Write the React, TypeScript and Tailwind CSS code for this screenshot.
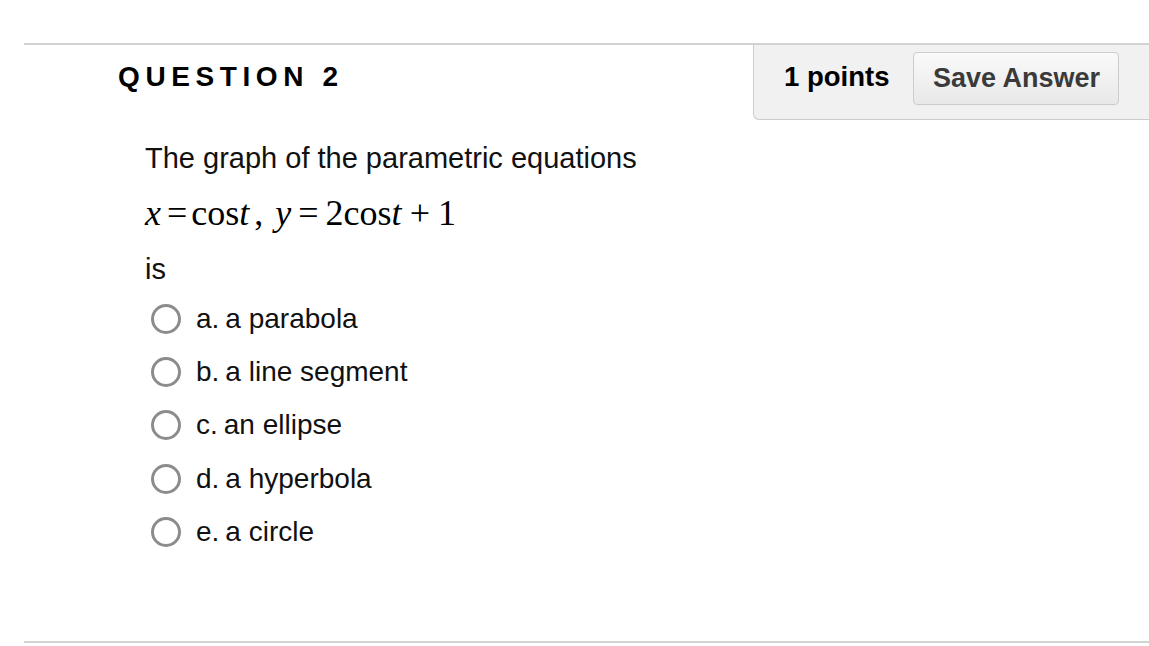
const options = [
  { key: 'a.', label: 'a parabola' },
  { key: 'b.', label: 'a line segment' },
  { key: 'c.', label: 'an ellipse' },
  { key: 'd.', label: 'a hyperbola' },
  { key: 'e.', label: 'a circle' },
]

function Radio() {
  return (
    <span className="w-[30px] h-[30px] rounded-full border-[3px] border-[#8c8c8c] bg-white shrink-0" />
  )
}

export default function App() {
  return (
    <div className="w-[1149px] h-[646px] overflow-hidden bg-white pt-[43px] pl-6 font-['Liberation_Sans',Arial,sans-serif] text-[#111]">
      <div className="border-t-2 border-[#d2d2d2] h-[598px] flex flex-col">
        <div className="flex justify-between">
          <h2 className="pl-[94px] pt-[16px] text-[28px] leading-[31px] font-bold tracking-[5.6px] text-black">
            QUESTION 2
          </h2>
          <div className="w-[396px] h-[75px] bg-[#f1f1f1] border-l border-b border-[#cccccc] rounded-bl-md pl-[30px] pt-[7px]">
            <div className="h-[53px] flex items-center gap-[24px]">
              <span className="text-[27.5px] font-bold text-black mt-[-3px]">1 points</span>
              <button className="w-[206px] h-[53px] rounded-[4px] border border-[#cccccc] bg-gradient-to-b from-[#fafafa] to-[#e8e8e8] text-[27px] font-bold text-[#3a3a3a]">
                Save Answer
              </button>
            </div>
          </div>
        </div>

        <div className="pl-[121px] pt-[20px]">
          <p className="text-[29px] leading-[36px]">The graph of the parametric equations</p>
          <p className="mt-[16px] text-[36px] leading-[42px] font-['Liberation_Serif','Times_New_Roman',serif] text-black whitespace-nowrap">
            <i>x</i>
            <span className="ml-[6px] mr-[4px]">=</span>
            <span>cos</span>
            <i>t</i>
            <span className="ml-[5px]">,</span>
            <i className="ml-[12px]">y</i>
            <span className="ml-[7px]">=</span>
            <span className="ml-[7px]">2</span>
            <span>cos</span>
            <i>t</i>
            <span className="ml-[8px]">+</span>
            <span className="ml-[8px]">1</span>
          </p>
          <p className="mt-[17px] text-[29px] leading-[36px]">is</p>
          <ul className="mt-[5px] pl-[6px]">
            {options.map((o) => (
              <li key={o.key} className="h-[53.3px] flex items-center gap-[15px]">
                <Radio />
                <span className="text-[28px]">
                  {o.key}
                  <span className="ml-[6px]">{o.label}</span>
                </span>
              </li>
            ))}
          </ul>
        </div>
      </div>
      <div className="border-t-2 border-[#d2d2d2]" />
    </div>
  )
}
